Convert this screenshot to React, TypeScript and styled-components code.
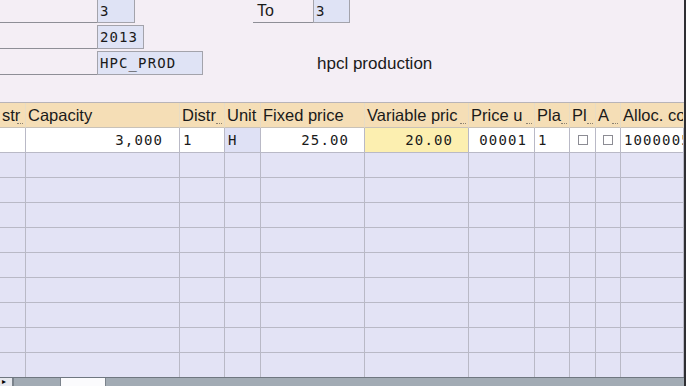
import React, { FC } from "react";
import styled, { createGlobalStyle } from "styled-components";

const GlobalStyle = createGlobalStyle`
  html, body {
    margin: 0;
    padding: 0;
    background: #f4eef5;
  }
`;

const COLS = [26, 154, 45, 36, 104, 104, 66, 35, 26, 25, 63];

const Screen = styled.div`
  width: 686px;
  height: 386px;
  box-sizing: border-box;
  border-right: 2px solid #2f2f33;
  background: #f4eef5;
  overflow: hidden;
  display: flex;
  flex-direction: column;
  font-family: "Liberation Sans", Arial, sans-serif;
  color: #1a1a1a;
`;

const Form = styled.div`
  height: 105px;
  flex: none;
  display: flex;
  flex-direction: column;
  margin-top: -3px;
`;

const FormRow = styled.div`
  height: 26px;
  display: flex;
  align-items: flex-end;
`;

const Label = styled.div<{ $w: number }>`
  width: ${(p) => p.$w}px;
  height: 24px;
  box-sizing: border-box;
  border-bottom: 1px solid #8e8e96;
  font-size: 16px;
  line-height: 24px;
  padding-left: 4px;
`;

const Field = styled.div<{ $w: number }>`
  width: ${(p) => p.$w}px;
  height: 24px;
  box-sizing: border-box;
  border: 1px solid #a3a3ab;
  background: #dfe3f5;
  font-family: "DejaVu Sans Mono", "Liberation Mono", monospace;
  font-size: 14px;
  letter-spacing: 1.1px;
  line-height: 22px;
  padding-left: 2px;
  white-space: nowrap;
`;

const Spacer = styled.div<{ $w: number }>`
  width: ${(p) => p.$w}px;
`;

const Description = styled.div`
  font-size: 17px;
  line-height: 24px;
  height: 24px;
  margin-bottom: -1px;
`;

const TableArea = styled.div`
  flex: 1;
  overflow: hidden;
`;

const Grid = styled.div`
  display: grid;
  grid-template-columns: ${COLS.map((c) => c + "px").join(" ")};
  grid-auto-rows: 25px;
  border-top: 1px solid #b8b4b8;
`;

const HeadCell = styled.div<{ $dots?: boolean }>`
  position: relative;
  height: 24px;
  background: #f5deb6;
  border-right: 1px solid #e8dcc4;
  border-bottom: 1px solid #c9c2b8;
  font-size: 16.5px;
  line-height: 24px;
  padding-left: 2px;
  white-space: nowrap;
  overflow: hidden;
  &::after {
    content: "";
    display: ${(p) => (p.$dots ? "block" : "none")};
    position: absolute;
    right: 2px;
    bottom: 3px;
    width: 6px;
    border-bottom: 1px dotted #8a8070;
  }
`;

type Tone = "white" | "blue" | "yellow" | "empty";

const toneBg: Record<Tone, string> = {
  white: "#ffffff",
  blue: "#dfe1f5",
  yellow: "#fcefb0",
  empty: "#e3e3f5",
};

const Cell = styled.div<{ $tone: Tone; $right?: boolean; $pr?: number }>`
  height: 24px;
  background: ${(p) => toneBg[p.$tone]};
  border-right: 1px solid #b9b9c6;
  border-bottom: 1px solid #b9b9c6;
  font-family: "DejaVu Sans Mono", "Liberation Mono", monospace;
  font-size: 14px;
  letter-spacing: 1.1px;
  line-height: 24px;
  padding: 0 ${(p) => p.$pr ?? 0}px 0 3px;
  white-space: nowrap;
  overflow: hidden;
  display: flex;
  align-items: center;
  justify-content: ${(p) => (p.$right ? "flex-end" : "flex-start")};
`;

const CheckCell = styled(Cell)`
  justify-content: center;
  padding: 0;
`;

const Box = styled.span`
  width: 10px;
  height: 10px;
  box-sizing: border-box;
  border: 1px solid #8c8c94;
  background: #ffffff;
`;

const ScrollBar = styled.div`
  height: 9px;
  flex: none;
  box-sizing: border-box;
  display: flex;
  border-top: 1px solid #6f7780;
  background: #a5aeb7;
`;

const ScrollArrow = styled.div`
  width: 13px;
  background: #e6e8ee;
  border-right: 1px solid #7b838c;
  font-size: 8px;
  line-height: 8px;
  color: #000;
  padding-left: 2px;
  box-sizing: border-box;
`;

const ScrollTrack = styled.div<{ $w?: number; $light?: boolean }>`
  width: ${(p) => (p.$w ? p.$w + "px" : "auto")};
  flex: ${(p) => (p.$w ? "none" : "1")};
  background: ${(p) => (p.$light ? "#fbfbfd" : "#a2abb4")};
  border-left: 1px solid #7b838c;
`;

const headers: { text: string; dots?: boolean }[] = [
  { text: "str", dots: true },
  { text: "Capacity" },
  { text: "Distr", dots: true },
  { text: "Unit" },
  { text: "Fixed price" },
  { text: "Variable pric", dots: true },
  { text: "Price u", dots: true },
  { text: "Pla", dots: true },
  { text: "Pl", dots: true },
  { text: "A", dots: true },
  { text: "Alloc. co" },
];

const EMPTY_ROWS = 10;

const App: FC = () => {
  return (
    <>
      <GlobalStyle />
      <Screen>
        <Form>
          <FormRow>
            <Label $w={97} />
            <Field $w={38}>3</Field>
            <Spacer $w={118} />
            <Label $w={60}>To</Label>
            <Field $w={37}>3</Field>
          </FormRow>
          <FormRow>
            <Label $w={97} />
            <Field $w={47}>2013</Field>
          </FormRow>
          <FormRow>
            <Label $w={97} />
            <Field $w={106}>HPC_PROD</Field>
            <Spacer $w={114} />
            <Description>hpcl production</Description>
          </FormRow>
        </Form>

        <TableArea>
          <Grid>
            {headers.map((h, i) => (
              <HeadCell key={i} $dots={h.dots}>
                {h.text}
              </HeadCell>
            ))}

            <Cell $tone="white" />
            <Cell $tone="white" $right $pr={16}>3,000</Cell>
            <Cell $tone="white">1</Cell>
            <Cell $tone="blue">H</Cell>
            <Cell $tone="white" $right $pr={15}>25.00</Cell>
            <Cell $tone="yellow" $right $pr={15}>20.00</Cell>
            <Cell $tone="white" $right $pr={7}>00001</Cell>
            <Cell $tone="white">1</Cell>
            <CheckCell $tone="white"><Box /></CheckCell>
            <CheckCell $tone="white"><Box /></CheckCell>
            <Cell $tone="white">1000005</Cell>

            {Array.from({ length: EMPTY_ROWS * COLS.length }).map((_, i) => (
              <Cell key={"e" + i} $tone="empty" />
            ))}
          </Grid>
        </TableArea>

        <ScrollBar>
          <ScrollArrow>▸</ScrollArrow>
          <ScrollTrack $w={46} />
          <ScrollTrack $w={44} $light />
          <ScrollTrack />
        </ScrollBar>
      </Screen>
    </>
  );
};

export default App;
